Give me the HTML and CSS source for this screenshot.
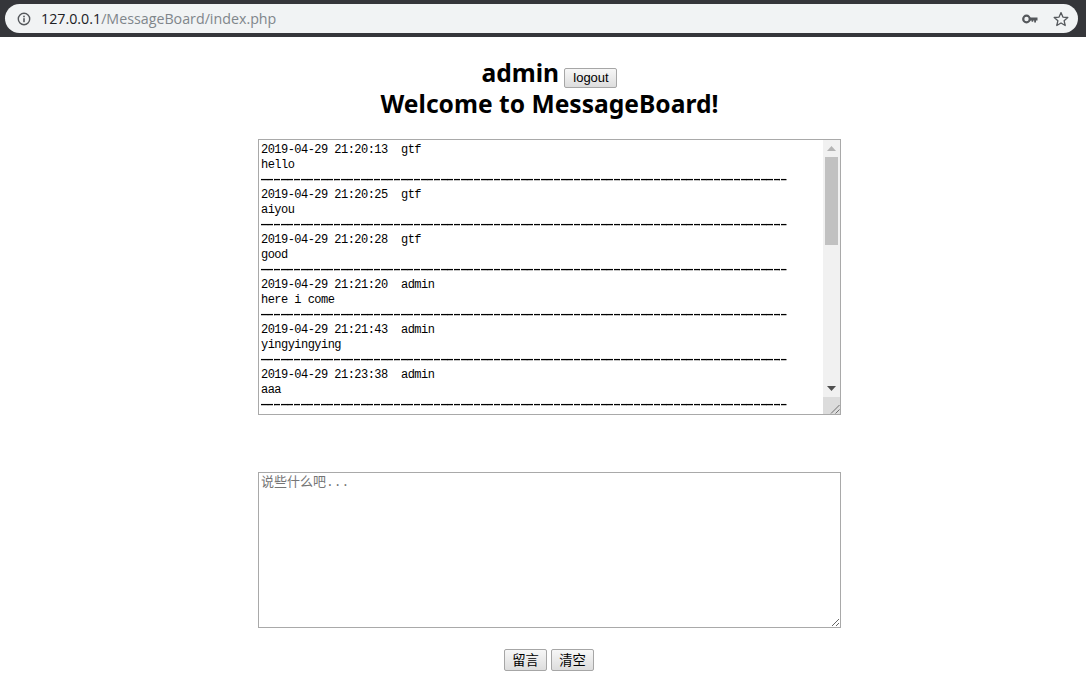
FILE: index.html
```html
<!DOCTYPE html>
<html lang="zh">
<head>
<meta charset="utf-8">
<title>MessageBoard</title>
<link rel="stylesheet" href="styles.css">
</head>
<body>
<header class="toolbar">
  <div class="omnibox">
    <svg class="info" width="14" height="14" viewBox="0 0 14 14"><circle cx="7" cy="7" r="5.7" fill="none" stroke="#55585c" stroke-width="1.4"/><rect x="6.2" y="6.2" width="1.6" height="4" fill="#55585c"/><rect x="6.2" y="3.7" width="1.6" height="1.6" fill="#55585c"/></svg>
    <div class="url"><span class="host">127.0.0.1</span>/MessageBoard/index.php</div>
    <svg class="key" width="16" height="10" viewBox="0 0 16 10"><circle cx="4.5" cy="5" r="3.3" fill="none" stroke="#55585c" stroke-width="2.2"/><path d="M8 3.6h7.5v2.8h-1.5v2h-1.8v-2h-1v1.4h-1.6v-1.4H8z" fill="#55585c"/></svg>
    <svg class="star" width="16" height="16" viewBox="0 0 16 16"><path d="M8 1.6l1.9 4.5 4.9.4-3.7 3.2 1.1 4.8L8 12l-4.2 2.5 1.1-4.8L1.2 6.5l4.9-.4z" fill="none" stroke="#55585c" stroke-width="1.3" stroke-linejoin="round"/></svg>
  </div>
</header>
<main class="board">
  <h1 class="title"><span class="line">admin <button class="btn btn-logout" type="button">logout</button></span><span class="line">Welcome to MessageBoard!</span></h1>
  <div class="log">
    <div class="log-text">
      <div>2019-04-29 21:20:13&nbsp; gtf</div><div>hello</div><div class="rule">———————————————————————————————————————————————————————————————————————————————</div>
      <div>2019-04-29 21:20:25&nbsp; gtf</div><div>aiyou</div><div class="rule">———————————————————————————————————————————————————————————————————————————————</div>
      <div>2019-04-29 21:20:28&nbsp; gtf</div><div>good</div><div class="rule">———————————————————————————————————————————————————————————————————————————————</div>
      <div>2019-04-29 21:21:20&nbsp; admin</div><div>here i come</div><div class="rule">———————————————————————————————————————————————————————————————————————————————</div>
      <div>2019-04-29 21:21:43&nbsp; admin</div><div>yingyingying</div><div class="rule">———————————————————————————————————————————————————————————————————————————————</div>
      <div>2019-04-29 21:23:38&nbsp; admin</div><div>aaa</div><div class="rule">———————————————————————————————————————————————————————————————————————————————</div>
    </div>
    <div class="scrollbar">
      <div class="arrow"><svg width="9" height="5" viewBox="0 0 9 5"><path d="M4.5 0L9 5H0z" fill="#b4b4b4"/></svg></div>
      <div class="track"><div class="thumb"></div></div>
      <div class="arrow"><svg width="9" height="5" viewBox="0 0 9 5"><path d="M0 0h9L4.5 5z" fill="#505050"/></svg></div>
      <div class="corner"><svg width="10" height="10" viewBox="0 0 10 10"><path d="M9.5 1L1 9.5M9.5 5.5L5.5 9.5" stroke="#6e6e6e" stroke-width="1" fill="none"/></svg></div>
    </div>
  </div>
  <textarea class="input" placeholder="说些什么吧..."></textarea>
  <div class="actions">
    <button class="btn btn-cjk" type="button">留言</button>
    <button class="btn btn-cjk" type="button">清空</button>
  </div>
</main>
</body>
</html>
```
FILE: styles.css
```css
* { box-sizing: border-box; }
html, body { margin: 0; padding: 0; background: #fff; }
body { height: 688px; overflow: hidden; }

.toolbar {
  height: 37px;
  background: #35363a;
  padding: 4px 8px 4px 5px;
}
.omnibox {
  height: 29px;
  border-radius: 15px;
  background: #f1f3f4;
  display: flex;
  align-items: center;
  padding-left: 12px;
}
.info { flex: none; }
.url {
  margin-left: 10px;
  flex: 1;
  font: 14.25px "Open Sans", sans-serif;
  color: #80868b;
  white-space: nowrap;
}
.host { color: #202124; }
.key { flex: none; margin-right: 15px; }
.star { flex: none; margin-right: 9px; }

.board {
  display: flex;
  flex-direction: column;
  align-items: center;
  padding-left: 13px;
}
.title {
  margin: 20px 0 20px;
  font: bold 24.6px/31px "Noto Sans", sans-serif;
  color: #000;
  text-align: center;
}
.line { display: block; height: 31px; }
.btn {
  border: 1px solid #a6a6a6;
  border-radius: 2px;
  background: linear-gradient(#f7f7f7, #dddddd);
  color: #000;
  padding: 0;
  margin: 0;
}
.btn-logout {
  width: 53px;
  height: 20px;
  margin-left: -1px;
  font: 13px "Liberation Sans", sans-serif;
}
.log {
  width: 583px;
  height: 276px;
  border: 1px solid #a9a9a9;
  display: flex;
  background: #fff;
}
.log-text {
  flex: 1;
  padding: 3px 2px 0;
  overflow: hidden;
  font: 12px/15px "Liberation Mono", "Noto Sans CJK SC", monospace;
  letter-spacing: -0.533px;
  color: #000;
  white-space: nowrap;
}
.rule {
  width: 526px;
  height: 15px;
  font-weight: bold;
  line-height: 14px;
  letter-spacing: -0.556px;
  -webkit-mask-image: repeating-linear-gradient(90deg, #000 0 12px, transparent 12px 13px, #000 13px 19px, transparent 19px 20px);
  mask-image: repeating-linear-gradient(90deg, #000 0 12px, transparent 12px 13px, #000 13px 19px, transparent 19px 20px);
}
.scrollbar {
  width: 17px;
  flex: none;
  display: flex;
  flex-direction: column;
  background: #f1f1f1;
}
.arrow {
  height: 17px;
  flex: none;
  display: flex;
  align-items: center;
  justify-content: center;
}
.track { flex: 1; padding: 0 2px; }
.thumb { height: 88px; background: #c1c1c1; }
.corner {
  height: 17px;
  flex: none;
  background: #dcdcdc;
  display: flex;
  align-items: flex-end;
  justify-content: flex-end;
}
.input {
  display: block;
  width: 583px;
  height: 156px;
  margin-top: 57px;
  padding: 2px;
  border: 1px solid #a9a9a9;
  border-radius: 0;
  outline: none;
  font: 13px/15px "Liberation Mono", "Noto Sans CJK SC", monospace;
  background: #fff;
}
.input::placeholder { color: #757575; }
.actions {
  display: flex;
  gap: 4px;
  margin-top: 21px;
  margin-right: 1px;
}
.btn-cjk {
  width: 43px;
  height: 22px;
  font: 13.33px/20px "Noto Sans CJK SC", sans-serif;
}
```
